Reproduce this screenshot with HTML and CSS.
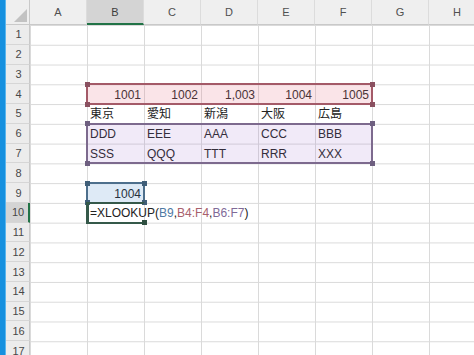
FILE: index.html
```html
<!DOCTYPE html>
<html>
	<head>
		<meta charset="utf-8">
		<title>XLOOKUP</title>
		<link rel="stylesheet" href="styles.css">
	</head>
	<body>
		<div class="app">
			<div class="edge"></div>
			<div class="sheet">
				<!-- headers -->
				<div class="corner"><span class="tri"></span></div>
				<div class="ch">A</div>
				<div class="ch sel">B</div>
				<div class="ch">C</div>
				<div class="ch">D</div>
				<div class="ch">E</div>
				<div class="ch">F</div>
				<div class="ch">G</div>
				<div class="ch">H</div>

				<div class="rh">1</div>
				<div class="rh">2</div>
				<div class="rh">3</div>
				<div class="rh">4</div>
				<div class="rh">5</div>
				<div class="rh">6</div>
				<div class="rh">7</div>
				<div class="rh">8</div>
				<div class="rh">9</div>
				<div class="rh sel">10</div>
				<div class="rh">11</div>
				<div class="rh">12</div>
				<div class="rh">13</div>
				<div class="rh">14</div>
				<div class="rh">15</div>
				<div class="rh">16</div>
				<div class="rh">17</div>

				<!-- reference ranges -->
				<div class="rng price"><span class="h tl"></span><span class="h tr"></span><span class="h bl"></span><span class="h br"></span></div>
				<div class="rng data"><span class="h tl"></span><span class="h tr"></span><span class="h bl"></span><span class="h br"></span></div>
				<div class="rng key"><span class="h tl"></span><span class="h tr"></span><span class="h bl"></span><span class="h br"></span></div>
				<div class="rng active"><span class="h br"></span></div>

				<!-- cells -->
				<div class="cell num r4 cB">1001</div>
				<div class="cell num r4 cC">1002</div>
				<div class="cell num r4 cD">1,003</div>
				<div class="cell num r4 cE">1004</div>
				<div class="cell num r4 cF">1005</div>

				<div class="cell r5 cB">東京</div>
				<div class="cell r5 cC">愛知</div>
				<div class="cell r5 cD">新潟</div>
				<div class="cell r5 cE">大阪</div>
				<div class="cell r5 cF">広島</div>

				<div class="cell r6 cB">DDD</div>
				<div class="cell r6 cC">EEE</div>
				<div class="cell r6 cD">AAA</div>
				<div class="cell r6 cE">CCC</div>
				<div class="cell r6 cF">BBB</div>

				<div class="cell r7 cB">SSS</div>
				<div class="cell r7 cC">QQQ</div>
				<div class="cell r7 cD">TTT</div>
				<div class="cell r7 cE">RRR</div>
				<div class="cell r7 cF">XXX</div>

				<div class="cell num r9 cB">1004</div>
				<div class="cell r10 cB">=XLOOKUP(<span class="ref1">B9</span>,<span class="ref2">B4:F4</span>,<span class="ref3">B6:F7</span>)<span class="caret"></span></div>
			</div>
		</div>
	</body>
</html>
```

FILE: styles.css
```css
*{margin: 0; padding: 0; box-sizing: border-box;}
body{font-family: "Liberation Sans", "Noto Sans CJK JP", sans-serif; font-size: 12px; color: #222; background: #fff;}

.app{display: flex; width: 474px; height: 355px; overflow: hidden;}
.edge{flex: none; width: 6px; background: #1690df; border-right: 1px solid #5ab6ee;}

.sheet{
	flex: none;
	display: grid;
	grid-template-columns: 24px repeat(8, 57px);
	grid-template-rows: 25px repeat(17, 19.77px);
	background-color: #fff;
	background-image: linear-gradient(to right, #dadada 1px, transparent 1px), linear-gradient(to bottom, #dadada 1px, transparent 1px);
	background-size: 57px 100%, 100% 19.77px;
	background-position: 24px 0, 0 25px;
}

/* headers */
.corner{display: flex; justify-content: flex-end; align-items: flex-end; padding: 0 2px 2px 0; background: #efefef; border-right: 1px solid #c9c9c9; border-bottom: 1px solid #c9c9c9;}
.tri{width: 0; height: 0; border-left: 13px solid transparent; border-bottom: 13px solid #c2c2c2;}
.ch{display: flex; align-items: center; justify-content: center; background: #efefef; color: #505050; font-size: 11px; border-right: 1px solid #dcdcdc; border-bottom: 1px solid #c9c9c9;}
.ch.sel{background: #d4d4d4; border-bottom: 2px solid #217346; color: #3d3d3d;}
.rh{grid-column: 1; display: flex; align-items: center; justify-content: center; padding-left: 2px; background: #ececec; color: #484848; font-size: 11px; border-right: 1px solid #c9c9c9; border-bottom: 1px solid #d6d6d6;}
.rh.sel{background: #d4d4d4; border-right: 2px solid #217346;}

/* reference ranges */
.rng{position: relative; margin: -1px; border: 2px solid;}
.price{grid-column: 3 / 8; grid-row: 5; border-color: #a45a68; background: rgba(228, 118, 138, 0.2);}
.data{grid-column: 3 / 8; grid-row: 7 / 9; border-color: #7d6a8e; background: rgba(160, 112, 210, 0.15);}
.key{grid-column: 3; grid-row: 10; border-color: #4d6f8c; background: rgba(60, 130, 200, 0.17);}
.active{grid-column: 3; grid-row: 11; border-color: #35594a; border-left-width: 3px; border-right-color: transparent;}
.h{position: absolute; width: 5px; height: 5px; background: #8a5060;}
.data .h{background: #6e5f80;}
.key .h{background: #3f5e78;}
.active .h{background: #2f4f41;}
.tl{top: -3.5px; left: -3.5px;}
.tr{top: -3.5px; right: -3.5px;}
.bl{bottom: -3.5px; left: -3.5px;}
.br{bottom: -3.5px; right: -3.5px;}

/* cells */
.cell{display: flex; align-items: center; padding: 1px 3px 0 3px; white-space: nowrap; line-height: 1;}
.num{justify-content: flex-end;}
.r4{grid-row: 5;}
.r5{grid-row: 6;}
.r6{grid-row: 7;}
.r7{grid-row: 8;}
.r9{grid-row: 10;}
.r10{grid-row: 11;}
.cB{grid-column: 3;}
.cC{grid-column: 4;}
.cD{grid-column: 5;}
.cE{grid-column: 6;}
.cF{grid-column: 7;}

.ref1{color: #4f7aa3;}
.ref2{color: #a8606c;}
.ref3{color: #806a98;}
.caret{display: inline-block; width: 1px; height: 15px; margin-left: 1px; background: #222;}
```
